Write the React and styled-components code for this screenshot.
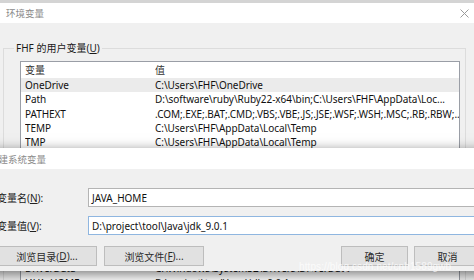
import React from 'react';
import styled, { createGlobalStyle } from 'styled-components';

const Global = createGlobalStyle`
  html, body { margin: 0; padding: 0; background: #d4d4d4; }
  * { box-sizing: border-box; }
`;

const Screen = styled.div`
  position: relative;
  width: 474px;
  height: 280px;
  overflow: hidden;
  background: #d4d4d4;
  padding-top: 3px;
  font-family: "Noto Sans", "Noto Sans CJK SC", sans-serif;
  font-size: 10px;
  color: #1a1a1a;
`;

const Window = styled.div`
  width: 484px;
  background: #f0f0f0;
`;

const TitleBar = styled.div`
  height: ${p => p.$h}px;
  background: #ffffff;
  display: flex;
  align-items: center;
  justify-content: space-between;
  padding: 0 ${p => p.$pr || 0}px 0 ${p => p.$pl}px;
  color: #8a8a8a;
  font-family: "Noto Sans CJK SC", sans-serif;
  font-size: 9.5px;
`;

const Close = styled.svg`
  width: 9px;
  height: 9px;
  stroke: #9a9a9a;
  stroke-width: 1;
`;

const Body = styled.div`
  padding: 18px 0 0 3px;
`;

const Group = styled.fieldset`
  margin: 0;
  width: 463px;
  border: 1px solid #dcdcdc;
  padding: 5px 0 7px 10px;
`;

const Legend = styled.legend`
  padding: 0 2px;
  line-height: 15px;
  color: #1a1a1a;
`;

const List = styled.div`
  margin-left: 6px;
  width: 440px;
  height: ${p => p.$h}px;
  border: 1px solid #9a9ea6;
  background: #ffffff;
  overflow: hidden;
`;

const Row = styled.div`
  display: grid;
  grid-template-columns: 130px 1fr;
  height: ${p => (p.$head ? 16 : 14.3)}px;
  align-items: center;
  padding-left: 4px;
  background: ${p => (p.$sel ? '#ebebeb' : 'transparent')};
  color: ${p => (p.$head ? '#333' : '#111')};
`;

const Cell = styled.span`
  white-space: nowrap;
  overflow: hidden;
  line-height: 14px;
  letter-spacing: -0.05px;
`;

const BtnRow = styled.div`
  display: flex;
  justify-content: flex-end;
  gap: 7px;
  padding: 7px 10px 26px 0;
`;

const Button = styled.div`
  width: ${p => p.$w}px;
  height: 20px;
  display: flex;
  align-items: center;
  justify-content: center;
  background: #e1e1e1;
  border: 1px solid #bdbdbd;
  color: #2a2a2a;
  font-size: 10px;
  white-space: nowrap;
  margin-left: ${p => (p.$push ? 'auto' : '0')};
`;

const Dialog = styled.div`
  position: absolute;
  top: 148px;
  left: -18px;
  width: 514px;
  background: #f0f0f0;
  box-shadow: 0 3px 12px rgba(0, 0, 0, 0.55);
`;

const DialogBody = styled.div`
  padding: 19px 15px 5px 15px;
`;

const Form = styled.div`
  display: grid;
  grid-template-columns: 91px 1fr;
  row-gap: 9px;
  align-items: center;
`;

const Label = styled.label`
  color: #222;
  font-size: 10px;
`;

const Input = styled.div`
  height: 19px;
  display: flex;
  align-items: center;
  padding-left: 3px;
  background: #ffffff;
  border: 1px solid ${p => (p.$focus ? '#8fb6e0' : '#b4b4b4')};
  color: #111;
  font-size: 10px;
`;

const DialogButtons = styled.div`
  display: flex;
  gap: 7px;
  margin-top: 11px;
  & > :last-child { margin-left: -1px; }
`;

const Watermark = styled.div`
  position: absolute;
  left: 299px;
  top: 261px;
  font-family: "Liberation Sans", sans-serif;
  font-size: 10px;
  color: rgba(255, 255, 255, 0.75);
  letter-spacing: 0.1px;
`;

const userVars = [
  ['OneDrive', 'C:\\Users\\FHF\\OneDrive', true],
  ['Path', 'D:\\software\\ruby\\Ruby22-x64\\bin;C:\\Users\\FHF\\AppData\\Loc...'],
  ['PATHEXT', '.COM;.EXE;.BAT;.CMD;.VBS;.VBE;.JS;.JSE;.WSF;.WSH;.MSC;.RB;.RBW;....'],
  ['TEMP', 'C:\\Users\\FHF\\AppData\\Local\\Temp'],
  ['TMP', 'C:\\Users\\FHF\\AppData\\Local\\Temp'],
];

const sysVars = [
  ['ComSpec', 'C:\\WINDOWS\\system32\\cmd.exe'],
  ['DriverData', 'C:\\Windows\\System32\\Drivers\\DriverData'],
  ['JAVA_HOME', 'D:\\project\\tool\\Java\\jdk_9.0.1'],
  ['NUMBER_OF_PROCESSORS', '4'],
  ['OS', 'Windows_NT'],
];

export default function App() {
  return (
    <Screen>
      <Global />
      <Window>
        <TitleBar $h={20} $pl={6} $pr={15}>
          <span>环境变量</span>
          <Close viewBox="0 0 9 9">
            <line x1="0.5" y1="0.5" x2="8.5" y2="8.5" />
            <line x1="8.5" y1="0.5" x2="0.5" y2="8.5" />
          </Close>
        </TitleBar>
        <Body>
          <Group>
            <Legend>FHF 的用户变量(<u>U</u>)</Legend>
            <List $h={104}>
              <Row $head>
                <Cell>变量</Cell>
                <Cell>值</Cell>
              </Row>
              {userVars.map(([k, v, sel]) => (
                <Row key={k} $sel={sel}>
                  <Cell>{k}</Cell>
                  <Cell>{v}</Cell>
                </Row>
              ))}
            </List>
            <BtnRow>
              <Button $w={67}>新建(<u>N</u>)...</Button>
              <Button $w={67}>编辑(<u>E</u>)...</Button>
              <Button $w={67}>删除(<u>D</u>)</Button>
            </BtnRow>
          </Group>
          <Group>
            <Legend>系统变量(<u>S</u>)</Legend>
            <List $h={110}>
              {sysVars.map(([k, v]) => (
                <Row key={k}>
                  <Cell>{k}</Cell>
                  <Cell>{v}</Cell>
                </Row>
              ))}
            </List>
          </Group>
        </Body>
      </Window>

      <Dialog>
        <TitleBar $h={21} $pl={7}>
          <span>新建系统变量</span>
        </TitleBar>
        <DialogBody>
          <Form>
            <Label>变量名(<u>N</u>):</Label>
            <Input>JAVA_HOME</Input>
            <Label>变量值(<u>V</u>):</Label>
            <Input $focus>D:\project\tool\Java\jdk_9.0.1</Input>
          </Form>
          <DialogButtons>
            <Button $w={100}>浏览目录(<u>D</u>)...</Button>
            <Button $w={100}>浏览文件(<u>F</u>)...</Button>
            <Button $w={67} $push>确定</Button>
            <Button $w={67}>取消</Button>
          </DialogButtons>
        </DialogBody>
      </Dialog>
      <Watermark>https://blog.csdn.net/cnh1589gwb</Watermark>
    </Screen>
  );
}
